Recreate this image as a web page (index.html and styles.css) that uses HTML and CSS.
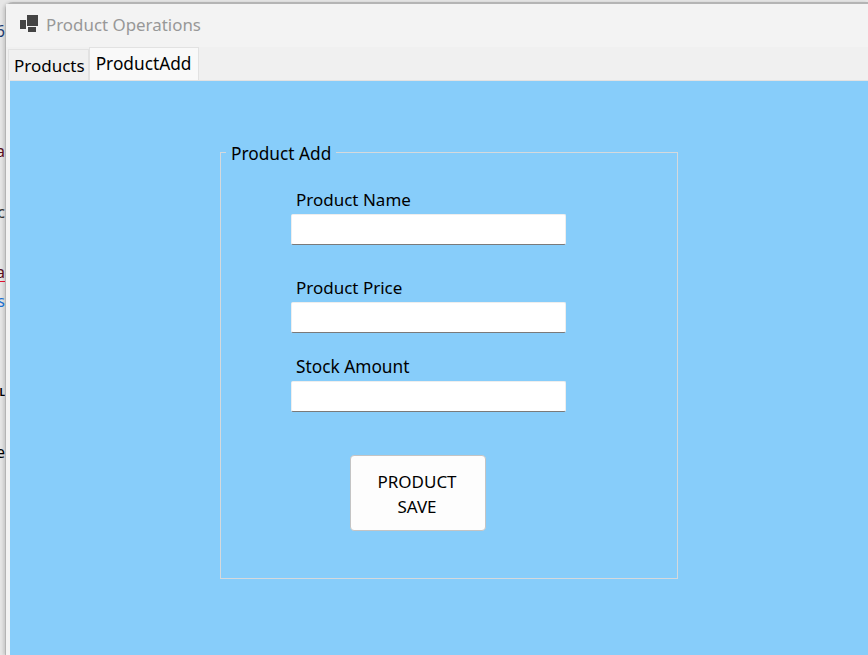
FILE: index.html
```html
<!DOCTYPE html>
<html lang="en">
<head>
    <meta charset="UTF-8">
    <meta name="viewport" content="width=device-width, initial-scale=1.0">
    <title>Product Operations</title>
    <link rel="stylesheet" href="styles.css">
</head>
<body>
    <div class="behind">
        <span class="frag frag-1">6</span>
        <span class="frag frag-2">a</span>
        <span class="frag frag-3">c</span>
        <span class="frag frag-4">a</span>
        <span class="frag frag-5">s</span>
        <span class="frag frag-6">L</span>
        <span class="frag frag-7">e</span>
    </div>
    <div class="window">
        <div class="titlebar">
            <svg class="app-icon" width="20" height="20" viewBox="0 0 20 20">
                <rect x="0" y="6" width="6" height="9" fill="#444"/>
                <rect x="7" y="1" width="11" height="11" fill="#444"/>
                <rect x="8" y="13" width="8" height="5" fill="#444"/>
            </svg>
            <span class="title">Product Operations</span>
        </div>
        <div class="tabs">
            <div class="tab">Products</div>
            <div class="tab tab-active">ProductAdd</div>
        </div>
        <div class="tab-page">
            <fieldset class="group">
                <legend>Product Add</legend>
                <div class="field field-name">
                    <label for="name">Product Name</label>
                    <input type="text" id="name">
                </div>
                <div class="field field-price">
                    <label for="price">Product Price</label>
                    <input type="text" id="price">
                </div>
                <div class="field field-stock">
                    <label for="stock">Stock Amount</label>
                    <input type="text" id="stock">
                </div>
                <button type="button">PRODUCT<br>SAVE</button>
            </fieldset>
        </div>
    </div>
</body>
</html>
```

FILE: styles.css
```css
html, body {
    height: 100%;
}
body {
    margin: 0;
    background-color: #e6e6e6;
    font-family: "Noto Sans", sans-serif;
    font-size: 17px;
    color: #000000;
    overflow: hidden;
    display: flex;
    padding-top: 2px;
    box-sizing: border-box;
}
/* editor text peeking out from behind the window */
.behind {
    position: absolute;
    left: 0;
    top: 0;
    width: 5px;
    height: 100%;
    overflow: hidden;
}
.frag {
    position: absolute;
    right: 0;
    font-size: 16px;
    line-height: 18px;
}
.frag-1 { top: 22px; color: #1a3a70; }
.frag-2 { top: 142px; color: #5a1020; }
.frag-3 { top: 203px; color: #333333; }
.frag-4 { top: 263px; color: #5a1020; border-bottom: 1px solid #e01030; }
.frag-5 { top: 292px; color: #1a6fd0; }
.frag-6 { top: 383px; font-size: 10px; font-weight: bold; }
.frag-7 { top: 443px; }
.window {
    margin-left: 5px;
    flex: 1;
    display: flex;
    flex-direction: column;
    background: #f3f3f3;
    border: 1px solid #b4b4b4;
    border-width: 2px 0 0 1px;
    border-top-left-radius: 8px;
    box-shadow: -2px 0 3px rgba(0, 0, 0, 0.12);
}
.titlebar {
    height: 43px;
    display: flex;
    align-items: center;
    padding: 0 0 2px 14px;
    gap: 6px;
    box-sizing: border-box;
    background: #f3f3f3;
}
.app-icon {
    margin-top: -2px;
}
.title {
    font-size: 16.9px;
    color: #989898;
}
.tabs {
    height: 33px;
    display: flex;
    align-items: flex-end;
    background: #f0f0f0;
    padding-left: 2px;
}
.tab {
    height: 31px;
    padding: 0 3px 0 5px;
    line-height: 32px;
    background: #f0f0f0;
    border: 1px solid #e2e2e2;
    border-bottom: none;
    box-sizing: border-box;
}
.tab-active {
    height: 33px;
    padding: 0 6px;
    line-height: 31px;
    font-size: 17.3px;
    background: #f9f9f9;
}
.tab-page {
    flex: 1;
    margin-left: 4px;
    background: #87cdfa;
    border-top: 1px solid #e2e2e2;
    padding: 59px 0 0 210px;
}
.group {
    width: 458px;
    height: 439px;
    margin: 0;
    padding: 0;
    border: 1px solid #d5d9dc;
    box-sizing: border-box;
    display: flex;
    flex-direction: column;
    align-items: flex-start;
}
.group legend {
    margin-left: 5px;
    padding: 2px 5px 0;
    font-size: 17.3px;
}
.field {
    margin-left: 70px;
    display: flex;
    flex-direction: column;
}
.field label {
    padding-left: 5px;
    line-height: 24px;
    margin-bottom: 2px;
}
.field input {
    width: 275px;
    height: 31px;
    box-sizing: border-box;
    border: 1px solid #eeeeee;
    border-bottom: 1px solid #7a7a7a;
    border-radius: 2px;
    background: #ffffff;
    outline: none;
}
.field-name { margin-top: 23px; }
.field-price { margin-top: 31px; }
.field-stock { margin-top: 22px; }
.field-stock label { font-size: 17.3px; }
button {
    margin: 43px 0 0 129px;
    width: 136px;
    height: 76px;
    background: #fdfdfd;
    border: 1px solid #c4c4c4;
    border-radius: 4px;
    font-family: inherit;
    font-size: 17px;
    line-height: 25px;
    color: #000000;
    padding: 2px 2px 0 0;
}
```
